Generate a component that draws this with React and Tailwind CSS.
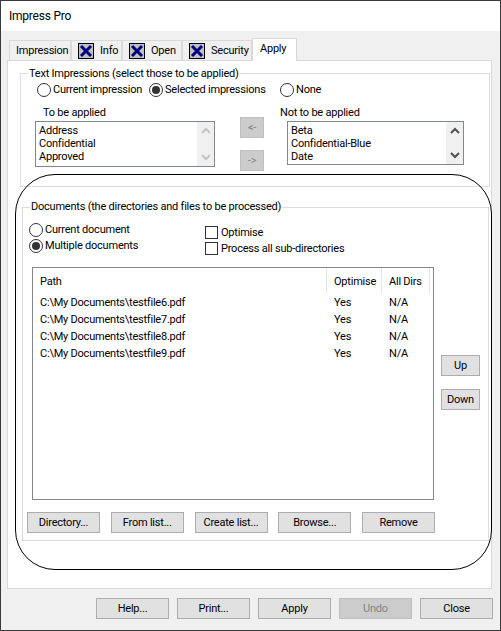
import React from "react";

const FONT = "font-['Roboto','Noto_Sans',sans-serif]";

const Btn = ({ children, disabled, className = "" }) => (
  <div
    className={`h-[21px] pt-px flex items-center justify-center border ${
      disabled
        ? "bg-[#cccccc] border-[#bfbfbf] text-[#838383]"
        : "bg-[#e1e1e1] border-[#adadad] text-black"
    } ${className}`}
  >
    {children}
  </div>
);

const Radio = ({ label, checked, className = "" }) => (
  <div className={`flex items-center h-[14px] ${className}`}>
    <div className="w-[14px] h-[14px] shrink-0 rounded-full border border-[#333333] bg-white flex items-center justify-center">
      {checked && <div className="w-[8px] h-[8px] rounded-full bg-[#333333]" />}
    </div>
    <span className="ml-[2px] pt-px whitespace-nowrap">{label}</span>
  </div>
);

const Check = ({ label }) => (
  <div className="flex items-center h-[13px]">
    <div className="w-[13px] h-[13px] shrink-0 border border-[#333333] bg-white" />
    <span className="ml-[3px] pt-px whitespace-nowrap">{label}</span>
  </div>
);

const XIcon = () => (
  <svg width="16" height="16" viewBox="0 0 16 16" className="shrink-0">
    <rect x="0.5" y="0.5" width="15" height="15" fill="#c0c0c0" stroke="#000" />
    <path d="M3 3 L13 13 M13 3 L3 13" stroke="#000080" strokeWidth="3" fill="none" />
  </svg>
);

const Chevron = ({ up, color }) => (
  <svg width="10" height="7" viewBox="0 0 10 7">
    <path
      d={up ? "M1 6 L5 2 L9 6" : "M1 1 L5 5 L9 1"}
      stroke={color}
      strokeWidth="2"
      fill="none"
    />
  </svg>
);

const ListBox = ({ items, arrow, className = "" }) => (
  <div className={`flex border border-[#828790] bg-white ${className}`}>
    <div className="flex-1 pl-[3px] pt-[2px] leading-[13px]">
      {items.map((item) => (
        <div key={item}>{item}</div>
      ))}
    </div>
    <div className="w-[17px] bg-[#f0f0f0] flex flex-col justify-between items-center py-[5px]">
      <Chevron up color={arrow} />
      <Chevron color={arrow} />
    </div>
  </div>
);

const Group = ({ title, titleClass = "top-[-9px]", className = "", children }) => (
  <div className={`relative border border-[#dcdcdc] ${className}`}>
    <span className={`absolute left-[7px] bg-white px-px leading-[16px] whitespace-nowrap ${titleClass}`}>
      {title}
    </span>
    {children}
  </div>
);

const Tab = ({ label, icon, className = "" }) => (
  <div
    className={`h-[20px] flex items-center pl-[6px] gap-[6px] border border-b-0 border-[#d9d9d9] bg-[#f0f0f0] ${className}`}
  >
    {icon && <XIcon />}
    <span className="pt-px">{label}</span>
  </div>
);

const files = ["testfile6", "testfile7", "testfile8", "testfile9"];

const App = () => {
  return (
    <div
      className={`${FONT} w-[501px] h-[631px] flex flex-col border border-[#3a3a3a] bg-[#f0f0f0] text-[11px] tracking-[-0.22px] text-black overflow-hidden`}
    >
      <div className="h-[30px] shrink-0 bg-white pl-[8px] flex items-center text-[12px]">Impress Pro</div>

      <div className="flex items-end h-[29px] shrink-0 pl-[8px]">
        <Tab label="Impression" className="w-[62px]" />
        <Tab label="Info" icon className="w-[51px]" />
        <Tab label="Open" icon className="w-[60px]" />
        <Tab label="Security" icon className="w-[70px]" />
        <div className="relative z-10 w-[45px] h-[23px] -mb-px flex items-start pt-[2px] pl-[7px] border border-b-0 border-[#d9d9d9] bg-white">
          Apply
        </div>
      </div>

      <div className="relative ml-[6px] w-[485px] h-[529px] shrink-0 border border-[#d9d9d9] bg-white">
        <Group
          title="Text Impressions (select those to be applied)"
          titleClass="top-[-8px]"
          className="ml-[12px] mt-[12px] w-[470px] h-[114px]"
        >
          <div className="flex pl-[16px] pt-[9px]">
            <Radio label="Current impression" className="w-[112px]" />
            <Radio label="Selected impressions" checked className="w-[131px]" />
            <Radio label="None" />
          </div>
          <div className="flex pl-[14px] mt-[7px]">
            <div className="w-[180px]">
              <div className="pl-[8px] pt-px h-[17px] leading-[16px]">To be applied</div>
              <ListBox
                items={["Address", "Confidential", "Approved"]}
                arrow="#c4c4c4"
                className="h-[46px]"
              />
            </div>
            <div className="ml-[25px] pt-[13px] flex flex-col gap-[12px] text-[#838383]">
              <Btn disabled className="w-[24px]">
                &lt;-
              </Btn>
              <Btn disabled className="w-[24px]">
                -&gt;
              </Btn>
            </div>
            <div className="ml-[16px]">
              <div className="pt-px h-[17px] leading-[16px]">Not to be applied</div>
              <ListBox
                items={["Beta", "Confidential-Blue", "Date"]}
                arrow="#505050"
                className="ml-[7px] w-[177px] h-[44px]"
              />
            </div>
          </div>
        </Group>

        <Group
          title="Documents (the directories and files to be processed)"
          className="ml-[14px] mt-[20px] w-[467px] h-[334px]"
        >
          <div className="flex pl-[6px] pt-[15px]">
            <div className="w-[176px] flex flex-col gap-[2px]">
              <Radio label="Current document" />
              <Radio label="Multiple documents" checked />
            </div>
            <div className="pt-[3px] flex flex-col gap-[3px]">
              <Check label="Optimise" />
              <Check label="Process all sub-directories" />
            </div>
          </div>

          <div className="flex pl-[9px] mt-[12px]">
            <div className="w-[402px] h-[233px] border border-[#828790] bg-white">
              <div className="grid grid-cols-[294px_55px_48px] h-[25px]">
                {["Path", "Optimise", "All Dirs"].map((head) => (
                  <div key={head} className="pl-[7px] pt-[3px] flex items-center border-r border-[#e5e5e5]">
                    {head}
                  </div>
                ))}
              </div>
              <div className="mt-[2px]">
                {files.map((file) => (
                  <div
                    key={file}
                    className="grid grid-cols-[294px_55px_48px] h-[17px] items-center"
                  >
                    <div className="pl-[7px]">{`C:\\My Documents\\${file}.pdf`}</div>
                    <div className="pl-[7px]">Yes</div>
                    <div className="pl-[7px]">N/A</div>
                  </div>
                ))}
              </div>
            </div>
            <div className="ml-[7px] pt-[88px] flex flex-col gap-[13px]">
              <Btn className="w-[39px]">Up</Btn>
              <Btn className="w-[39px]">Down</Btn>
            </div>
          </div>

          <div className="flex justify-between w-[408px] ml-[4px] mt-[12px]">
            {["Directory...", "From list...", "Create list...", "Browse...", "Remove"].map((b) => (
              <Btn key={b} className="w-[73px]">
                {b}
              </Btn>
            ))}
          </div>
        </Group>

        {/* hand drawn annotation round the documents section */}
        <div className="absolute left-[7px] top-[113px] w-[477px] h-[396px] rounded-[40px] border border-black pointer-events-none" />
      </div>

      <div className="flex justify-between w-[397px] ml-[95px] mt-[9px]">
        <Btn className="w-[73px]">Help...</Btn>
        <Btn className="w-[73px]">Print...</Btn>
        <Btn className="w-[73px]">Apply</Btn>
        <Btn disabled className="w-[73px]">
          Undo
        </Btn>
        <Btn className="w-[73px]">Close</Btn>
      </div>
    </div>
  );
};

export default App;
